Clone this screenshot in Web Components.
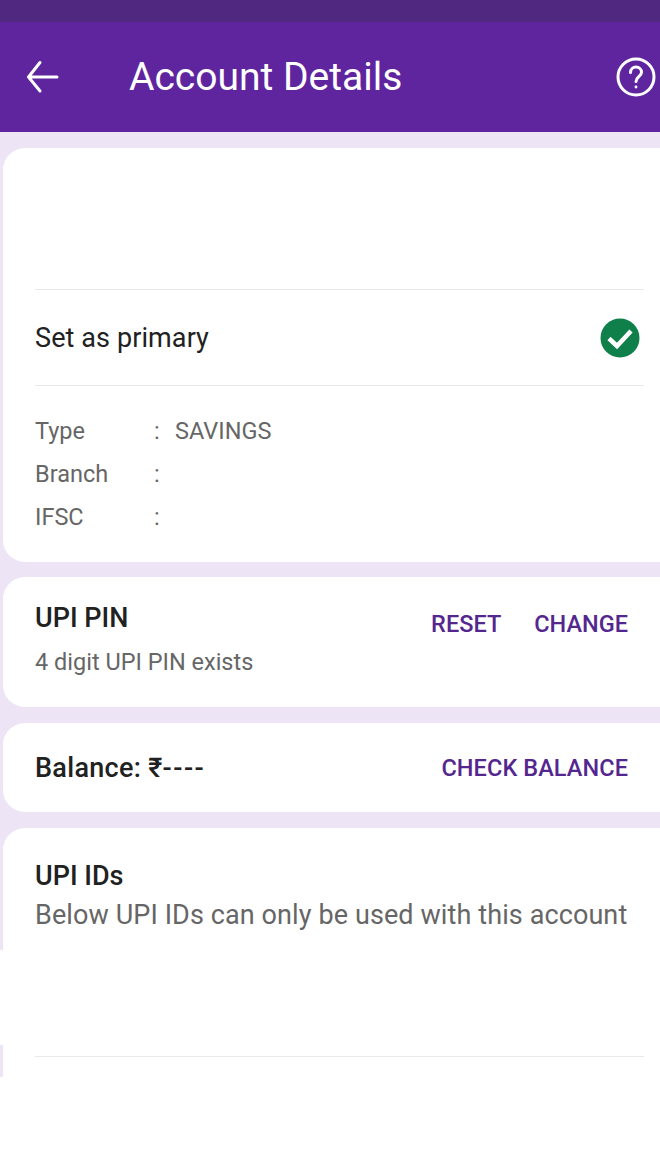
<!DOCTYPE html>
<html>
<head>
<meta charset="utf-8">
<style>
  html, body { margin: 0; padding: 0; background: #fff; }
  body { width: 660px; height: 1173px; overflow: hidden; font-family: Roboto, "Liberation Sans", sans-serif; }
</style>
</head>
<body>
<app-header title="Account Details"></app-header>
<details-page>
  <info-card style="height:414px;margin-bottom:-1px">
    <div slot="body" id="primary">
      <primary-row></primary-row>
      <detail-list></detail-list>
    </div>
  </info-card>
  <info-card style="height:130px">
    <pin-section slot="body"></pin-section>
  </info-card>
  <info-card style="height:89px">
    <balance-section slot="body"></balance-section>
  </info-card>
  <info-card style="height:400px">
    <upi-section slot="body"></upi-section>
  </info-card>
</details-page>

<script>
class AppHeader extends HTMLElement {
  connectedCallback() {
    this.attachShadow({ mode: 'open' });
    this.shadowRoot.innerHTML = `
      <style>
        :host { display: block; }
        .status { height: 22px; background: #50287f; }
        .bar {
          height: 110px;
          background: #5f259f;
          color: #fff;
          display: flex;
          align-items: center;
          padding: 0 4px 0 25px;
        }
        .back { width: 36px; height: 36px; flex: none; }
        h1 {
          flex: 1;
          margin: 0 0 1px 68px;
          font-size: 39px;
          font-weight: 400;
        }
        .help { width: 40px; height: 40px; flex: none; }
      </style>
      <div class="status"></div>
      <div class="bar">
        <svg class="back" viewBox="0 0 36 36" fill="none" stroke="#fff" stroke-width="3" stroke-linecap="round" stroke-linejoin="round">
          <path d="M32 18H3.500M15 3.500L3.500 18L15 32"/>
        </svg>
        <h1>${this.getAttribute('title')}</h1>
        <svg class="help" viewBox="0 0 40 40" fill="none" stroke="#fff" stroke-width="3" stroke-linecap="round">
          <circle cx="20" cy="20" r="18"/>
          <path d="M14.500 15.500c0-3.300 2.400-5.500 5.500-5.500s5.500 2.200 5.500 5.200c0 4.300-5.500 4.800-5.500 9.300"/>
          <circle cx="20" cy="30" r="0.700" fill="#fff" stroke-width="1.500"/>
        </svg>
      </div>
    `;
  }
}

class DetailsPage extends HTMLElement {
  connectedCallback() {
    this.attachShadow({ mode: 'open' });
    this.shadowRoot.innerHTML = `
      <style>
        :host {
          display: flex;
          flex-direction: column;
          gap: 16px;
          position: relative;
          height: 1041px;
          box-sizing: border-box;
          padding: 16px 0 0 3px;
          background: #ede5f6;
          overflow: hidden;
        }
        /* white patches over the left edge, as in the shot */
        .patch { position: absolute; left: 0; width: 4px; background: #fff; }
        .a { top: 818px; height: 95px; }
        .b { top: 945px; height: 96px; }
      </style>
      <slot></slot>
      <div class="patch a"></div>
      <div class="patch b"></div>
    `;
  }
}

class InfoCard extends HTMLElement {
  connectedCallback() {
    this.attachShadow({ mode: 'open' });
    this.shadowRoot.innerHTML = `
      <style>
        :host {
          display: block;
          flex: none;
          box-sizing: border-box;
          background: #fff;
          border-radius: 22px 0 0 22px;
          padding: 0 16px 0 32px;
        }
      </style>
      <slot name="body"></slot>
    `;
  }
}

class PrimaryRow extends HTMLElement {
  connectedCallback() {
    this.attachShadow({ mode: 'open' });
    this.shadowRoot.innerHTML = `
      <style>
        :host {
          display: flex;
          align-items: center;
          justify-content: space-between;
          box-sizing: border-box;
          height: 97px;
          margin-top: 141px;
          padding-right: 4px;
          border-top: 1px solid #e8e8e8;
          border-bottom: 1px solid #e8e8e8;
          font-size: 27px;
          letter-spacing: 0.100px;
          color: #212121;
        }
        svg { width: 40px; height: 40px; }
      </style>
      <span>Set as primary</span>
      <svg viewBox="0 0 40 40">
        <circle cx="20" cy="20" r="19.500" fill="#10804a"/>
        <path d="M9 20.500L17 28L31 13" fill="none" stroke="#fff" stroke-width="4.500"/>
      </svg>
    `;
  }
}

class DetailList extends HTMLElement {
  connectedCallback() {
    this.attachShadow({ mode: 'open' });
    const rows = [['Type', 'SAVINGS'], ['Branch', ''], ['IFSC', '']];
    this.shadowRoot.innerHTML = `
      <style>
        :host {
          display: grid;
          grid-template-columns: 119px 21px 1fr;
          grid-auto-rows: 43px;
          align-items: center;
          padding-top: 23px;
          font-size: 23.500px;
          color: #666;
        }
      </style>
      ${rows.map(r => `<span>${r[0]}</span><span>:</span><span>${r[1]}</span>`).join('')}
    `;
  }
}

class PinSection extends HTMLElement {
  connectedCallback() {
    this.attachShadow({ mode: 'open' });
    this.shadowRoot.innerHTML = `
      <style>
        :host {
          display: flex;
          justify-content: space-between;
          padding: 23px 16px 0 0;
        }
        .title { font-size: 27px; font-weight: 500; color: #212121; line-height: 36px; }
        .sub { font-size: 23.500px; color: #666; line-height: 28px; margin-top: 12px; }
        .actions { display: flex; gap: 33px; margin-top: 8px; }
        .actions span { font-size: 23.500px; font-weight: 500; color: #54278f; line-height: 32px; }
      </style>
      <div>
        <div class="title">UPI PIN</div>
        <div class="sub">4 digit UPI PIN exists</div>
      </div>
      <div class="actions"><span>RESET</span><span>CHANGE</span></div>
    `;
  }
}

class BalanceSection extends HTMLElement {
  connectedCallback() {
    this.attachShadow({ mode: 'open' });
    this.shadowRoot.innerHTML = `
      <style>
        :host {
          display: flex;
          align-items: center;
          justify-content: space-between;
          height: 89px;
          padding-right: 16px;
        }
        .amount { font-size: 27px; font-weight: 500; color: #212121; letter-spacing: 0.300px; }
        .dashes { letter-spacing: 1.500px; }
        .action { font-size: 23.500px; font-weight: 500; color: #54278f; letter-spacing: 0.080px; }
      </style>
      <span class="amount">Balance: ₹<span class="dashes">----</span></span>
      <span class="action">CHECK BALANCE</span>
    `;
  }
}

class UpiSection extends HTMLElement {
  connectedCallback() {
    this.attachShadow({ mode: 'open' });
    this.shadowRoot.innerHTML = `
      <style>
        :host { display: block; padding-top: 30px; }
        .title { font-size: 27px; font-weight: 500; color: #212121; line-height: 36px; }
        .sub { font-size: 27px; letter-spacing: 0.100px; color: #666; line-height: 36px; margin-top: 3px; white-space: nowrap; }
        .rule { height: 1px; background: #e8e8e8; margin-top: 123px; }
      </style>
      <div class="title">UPI IDs</div>
      <div class="sub">Below UPI IDs can only be used with this account</div>
      <div class="rule"></div>
    `;
  }
}

customElements.define('app-header', AppHeader);
customElements.define('details-page', DetailsPage);
customElements.define('info-card', InfoCard);
customElements.define('primary-row', PrimaryRow);
customElements.define('detail-list', DetailList);
customElements.define('pin-section', PinSection);
customElements.define('balance-section', BalanceSection);
customElements.define('upi-section', UpiSection);
</script>
</body>
</html>
